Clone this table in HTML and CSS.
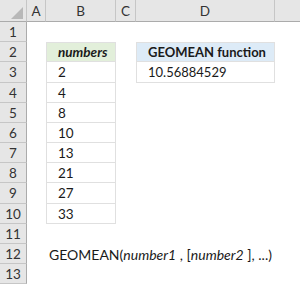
FILE: index.html
```html
<!DOCTYPE html>
<html lang="en">
<head>
  <meta charset="UTF-8">
  <title>GEOMEAN function</title>
  <link rel="stylesheet" href="styles.css">
</head>
<body>
  <div class="sheet">
    <div class="corner"><span class="triangle"></span></div>
    <div class="col-head">A</div>
    <div class="col-head">B</div>
    <div class="col-head">C</div>
    <div class="col-head">D</div>
    <div class="col-head last"></div>

    <div class="row-head r1">1</div>
    <div class="row-head r2">2</div>
    <div class="row-head r3">3</div>
    <div class="row-head r4">4</div>
    <div class="row-head r5">5</div>
    <div class="row-head r6">6</div>
    <div class="row-head r7">7</div>
    <div class="row-head r8">8</div>
    <div class="row-head r9">9</div>
    <div class="row-head r10">10</div>
    <div class="row-head r11">11</div>
    <div class="row-head r12">12</div>
    <div class="row-head r13">13</div>

    <div class="cell colb r2 green first">numbers</div>
    <div class="cell colb r3">2</div>
    <div class="cell colb r4">4</div>
    <div class="cell colb r5">8</div>
    <div class="cell colb r6">10</div>
    <div class="cell colb r7">13</div>
    <div class="cell colb r8">21</div>
    <div class="cell colb r9">27</div>
    <div class="cell colb r10">33</div>

    <div class="cell cold r2 blue first">GEOMEAN function</div>
    <div class="cell cold r3">10.56884529</div>

    <div class="syntax r12">GEOMEAN(<i>number1</i>&nbsp;, [<i>number2</i>&nbsp;], ...)</div>
  </div>
</body>
</html>
```

FILE: styles.css
```css
body {
  margin: 0;
  background: #fff;
  font-family: Lato, "Liberation Sans", sans-serif;
  font-size: 13px;
  color: #1a1a1a;
}
.sheet {
  display: grid;
  grid-template-columns: 27px 19px 70px 20px 139px 25px;
  grid-template-rows: 22px 20px 20px 21px 20px 20px 20px 20px 20px 21px 20px 20px 20px 20px;
  width: 300px;
}
.corner {
  grid-column: 1;
  grid-row: 1;
  position: relative;
  background: #e6e6e6;
  border-right: 1px solid #c6c6c6;
  border-bottom: 1px solid #ababab;
  box-sizing: border-box;
}
.triangle {
  position: absolute;
  right: 3px;
  bottom: 2px;
  width: 0;
  height: 0;
  border-left: 12px solid transparent;
  border-bottom: 12px solid #b8b8b8;
}
.col-head {
  grid-row: 1;
  background: #e6e6e6;
  border-right: 1px solid #c6c6c6;
  border-bottom: 1px solid #ababab;
  box-sizing: border-box;
  display: flex;
  align-items: center;
  justify-content: center;
  color: #333;
  font-size: 13.5px;
}
.col-head.last {
  border-right: none;
}
.row-head {
  grid-column: 1;
  background: #e6e6e6;
  border-right: 1px solid #ababab;
  border-bottom: 1px solid #c6c6c6;
  box-sizing: border-box;
  display: flex;
  align-items: center;
  justify-content: center;
  color: #333;
  font-size: 13.5px;
}
.r1 { grid-row: 2; }
.r2 { grid-row: 3; }
.r3 { grid-row: 4; }
.r4 { grid-row: 5; }
.r5 { grid-row: 6; }
.r6 { grid-row: 7; }
.r7 { grid-row: 8; }
.r8 { grid-row: 9; }
.r9 { grid-row: 10; }
.r10 { grid-row: 11; }
.r11 { grid-row: 12; }
.r12 { grid-row: 13; }
.r13 { grid-row: 14; }
.cell {
  display: flex;
  align-items: center;
  padding-left: 11px;
  border-left: 1px solid #e0e0e0;
  border-right: 1px solid #e0e0e0;
  border-bottom: 1px solid #e0e0e0;
  box-sizing: border-box;
  white-space: nowrap;
  font-size: 13.5px;
}
.cell.first {
  border-top: 1px solid #e0e0e0;
}
.colb {
  grid-column: 3;
}
.cold {
  grid-column: 5;
  font-size: 13px;
}
.green {
  background: #e2efda;
  font-weight: bold;
  font-style: italic;
}
.blue {
  background: #ddebf7;
  font-weight: bold;
}
.syntax {
  grid-column: 3 / 7;
  display: flex;
  align-items: center;
  padding-left: 3px;
  white-space: pre;
  font-size: 14px;
}
```
